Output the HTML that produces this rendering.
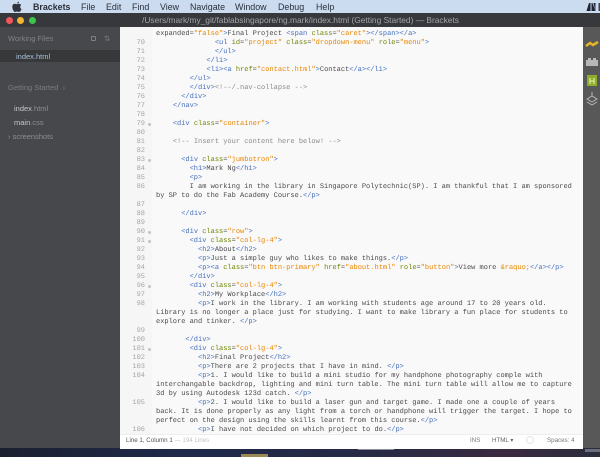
<!DOCTYPE html>
<html><head><meta charset="utf-8"><style>
html,body{margin:0;padding:0;width:600px;height:457px;overflow:hidden;background:#1c2238}
*{box-sizing:border-box}
#w{position:absolute;left:0;top:0;width:600px;height:457px;filter:blur(.3px)}
.abs{position:absolute}
.ui{font-family:"Liberation Sans",sans-serif;white-space:pre}
pre{margin:0;position:absolute;font:7px/9px "Liberation Mono",monospace;text-rendering:geometricPrecision;color:#4a4a4a}
i{font-style:normal;color:#446fbd}
b{font-weight:normal;color:#6d8600}
u{text-decoration:none;color:#e88501}
em{font-style:normal;color:#8a8a8a}
.m{position:absolute;top:1px;font:8.900px/13px "Liberation Sans",sans-serif;color:#2b2f3a;white-space:pre}
.s{position:absolute;top:435.500px;font:6.200px/10px "Liberation Sans",sans-serif;white-space:pre}
.f{position:absolute;left:148px;width:3px;height:3px;background:#c4c4c4;border-radius:50%}
.side{position:absolute;font:7.500px/10px "Liberation Sans",sans-serif;white-space:pre}
</style></head><body><div id="w">
<div class="abs" style="left:0;top:0;width:600px;height:13px;background:#ccdcf0"></div>
<svg class="abs" style="left:12px;top:1px" width="10" height="12" viewBox="0 0 10 12"><path d="M7 0.5C6 .7 5.200 1.500 5.200 2.700C6.300 2.700 7 1.700 7 .5ZM5 3.200C4 3.200 3.500 2.700 2.700 2.700C1.400 2.700.3 3.800.3 5.700C.3 8 1.800 11 3 11C3.800 11 4.200 10.500 5 10.500C5.800 10.500 6.200 11 7 11C8 11 9 9.500 9.500 8C8 7.300 7.700 5 9.200 4C8.500 3 7.500 2.700 6.900 2.700C6.200 2.700 5.600 3.200 5 3.200Z" fill="#30343d"/></svg>
<div class="m" style="left:33px;font-weight:bold">Brackets</div>
<div class="m" style="left:81px">File</div>
<div class="m" style="left:106px">Edit</div>
<div class="m" style="left:132px">Find</div>
<div class="m" style="left:160px">View</div>
<div class="m" style="left:190px">Navigate</div>
<div class="m" style="left:235px">Window</div>
<div class="m" style="left:278px">Debug</div>
<div class="m" style="left:316px">Help</div>
<svg class="abs" style="left:586px;top:3px" width="14" height="8" viewBox="0 0 14 8"><path d="M0.500 8L3 0H4.500V8ZM9.500 8L6.500 0H5.500V8ZM7.500 0H9.500V8Z" fill="#1d2230"/><path d="M12.500 0H14V8H12.500Z" fill="#39405a"/></svg>

<div class="abs" style="left:0;top:13px;width:600px;height:14px;background:#37383c"></div>
<div class="abs" style="left:6px;top:17px;width:7px;height:7px;border-radius:50%;background:#f0575c"></div>
<div class="abs" style="left:17px;top:17px;width:7px;height:7px;border-radius:50%;background:#f3b52f"></div>
<div class="abs" style="left:29px;top:17px;width:7px;height:7px;border-radius:50%;background:#3fc44a"></div>
<div class="abs ui" style="left:142px;top:14px;font-size:8.400px;line-height:13px;color:#a3a4a6">/Users/mark/my_git/fablabsingapore/ng.mark/index.html (Getting Started) — Brackets</div>

<div class="abs" style="left:0;top:27px;width:120px;height:421px;background:#47484b"></div>
<div class="abs" style="left:0;top:50px;width:120px;height:12px;background:#37383a"></div>
<div class="side" style="left:8px;top:34px;color:#828385">Working Files</div>
<div class="abs" style="left:91px;top:36px;width:5px;height:5px;border:1px solid #808183;border-radius:1px"></div>
<div class="side" style="left:104px;top:34px;color:#77787a">⇅</div>
<div class="side" style="left:16px;top:52px;color:#a8c0d8">index.html</div>
<div class="side" style="left:8px;top:83px;color:#7c7d80">Getting Started  ›</div>
<div class="side" style="left:14px;top:104px;color:#c6c7c9">index<span style="color:#8d8e90">.html</span></div>
<div class="side" style="left:14px;top:118px;color:#c6c7c9">main<span style="color:#8d8e90">.css</span></div>
<div class="side" style="left:8px;top:132px;color:#8d8e90">› screenshots</div>

<div class="abs" style="left:120px;top:27px;width:463px;height:408px;background:#f9f9f9"></div>
<div class="abs" style="left:120px;top:27px;width:32px;height:408px;background:#f6f6f6"></div>
<pre style="left:120px;top:30px;width:25px;text-align:right;color:#a6a6a6">

70
71
72
73
74
75
76
77
78
79
80
81
82
83
84
85
86

87
88
89
90
91
92
93
94
95
96
97
98


99
100
101
102
103
104


105


106</pre>
<div class="f" style="top:123px"></div>
<div class="f" style="top:159px"></div>
<div class="f" style="top:231px"></div>
<div class="f" style="top:240px"></div>
<div class="f" style="top:285px"></div>
<div class="f" style="top:348px"></div>
<pre style="left:156px;top:30px;height:404px;overflow:hidden">expanded=<u>"false"</u><i>&gt;</i>Final Project <i>&lt;span</i> <b>class</b>=<u>"caret"</u><i>&gt;&lt;/span&gt;&lt;/a&gt;</i>
              <i>&lt;ul</i> <b>id</b>=<u>"project"</u> <b>class</b>=<u>"dropdown-menu"</u> <b>role</b>=<u>"menu"</u><i>&gt;</i>
              <i>&lt;/ul&gt;</i>
            <i>&lt;/li&gt;</i>
            <i>&lt;li&gt;&lt;a</i> <b>href</b>=<u>"contact.html"</u><i>&gt;</i>Contact<i>&lt;/a&gt;&lt;/li&gt;</i>
        <i>&lt;/ul&gt;</i>
        <i>&lt;/div&gt;</i><em>&lt;!--/.nav-collapse --&gt;</em>
      <i>&lt;/div&gt;</i>
    <i>&lt;/nav&gt;</i>

    <i>&lt;div</i> <b>class</b>=<u>"container"</u><i>&gt;</i>

    <em>&lt;!-- Insert your content here below! --&gt;</em>

      <i>&lt;div</i> <b>class</b>=<u>"jumbotron"</u><i>&gt;</i>
        <i>&lt;h1&gt;</i>Mark Ng<i>&lt;/h1&gt;</i>
        <i>&lt;p&gt;</i>
        I am working in the library in Singapore Polytechnic(SP). I am thankful that I am sponsored
by SP to do the Fab Academy Course.<i>&lt;/p&gt;</i>

      <i>&lt;/div&gt;</i>

      <i>&lt;div</i> <b>class</b>=<u>"row"</u><i>&gt;</i>
        <i>&lt;div</i> <b>class</b>=<u>"col-lg-4"</u><i>&gt;</i>
          <i>&lt;h2&gt;</i>About<i>&lt;/h2&gt;</i>
          <i>&lt;p&gt;</i>Just a simple guy who likes to make things.<i>&lt;/p&gt;</i>
          <i>&lt;p&gt;&lt;a</i> <b>class</b>=<u>"btn btn-primary"</u> <b>href</b>=<u>"about.html"</u> <b>role</b>=<u>"button"</u><i>&gt;</i>View more <u>&amp;raquo;</u><i>&lt;/a&gt;&lt;/p&gt;</i>
        <i>&lt;/div&gt;</i>
        <i>&lt;div</i> <b>class</b>=<u>"col-lg-4"</u><i>&gt;</i>
          <i>&lt;h2&gt;</i>My Workplace<i>&lt;/h2&gt;</i>
          <i>&lt;p&gt;</i>I work in the library. I am working with students age around 17 to 20 years old.
Library is no longer a place just for studying. I want to make library a fun place for students to
explore and tinker. <i>&lt;/p&gt;</i>

       <i>&lt;/div&gt;</i>
        <i>&lt;div</i> <b>class</b>=<u>"col-lg-4"</u><i>&gt;</i>
          <i>&lt;h2&gt;</i>Final Project<i>&lt;/h2&gt;</i>
          <i>&lt;p&gt;</i>There are 2 projects that I have in mind. <i>&lt;/p&gt;</i>
          <i>&lt;p&gt;</i>1. I would like to build a mini studio for my handphone photography comple with
interchangable backdrop, lighting and mini turn table. The mini turn table will allow me to capture
3d by using Autodesk 123d catch. <i>&lt;/p&gt;</i>
          <i>&lt;p&gt;</i>2. I would like to build a laser gun and target game. I made one a couple of years
back. It is done properly as any light from a torch or handphone will trigger the target. I hope to
perfect on the design using the skills learnt from this course.<i>&lt;/p&gt;</i>
          <i>&lt;p&gt;</i>I have not decided on which project to do.<i>&lt;/p&gt;</i></pre>

<div class="abs" style="left:120px;top:434px;width:463px;height:15px;background:#fff;border-top:1px solid #eee"></div>
<div class="s" style="left:126px;color:#555">Line 1, Column 1 <span style="color:#c4c4c4">— 194 Lines</span></div>
<div class="s" style="left:470px;color:#777">INS</div>
<div class="s" style="left:492px;color:#666">HTML ▾</div>
<div class="abs" style="left:526px;top:436px;width:8px;height:8px;border-radius:50%;border:1px solid #e4e4e4"></div>
<div class="s" style="left:547px;color:#777">Spaces: 4</div>

<div class="abs" style="left:583px;top:27px;width:17px;height:421px;background:#585858"></div>
<svg class="abs" style="left:584px;top:36px" width="16" height="80" viewBox="0 0 16 80">
<path d="M2 10L6 7L9 9L14 6" fill="none" stroke="#e6b52a" stroke-width="2.500"/>
<path d="M2 30V24H4V22H7V24H9V22H12V24H14V30Z" fill="#b8b8b8"/>
<rect x="3" y="39" width="10" height="11" fill="#8fae2e"/>
<path d="M6 42V48M10 42V48M6 45H10" stroke="#dfe8a0" stroke-width="1.200"/>
<path d="M8 56V60M3 63L8 60L13 63L8 66ZM3 66L8 69L13 66" fill="none" stroke="#b5b5b5" stroke-width="1"/>
</svg>

<div class="abs" style="left:0;top:448px;width:600px;height:9px;background:linear-gradient(90deg,#1b2030 0,#1f2a4a 30%,#262a45 60%,#3a2a40 85%,#2a2c3c 100%)"></div>
<div class="abs" style="left:120px;top:448px;width:463px;height:1px;background:#fff"></div>
<div class="abs" style="left:241px;top:454px;width:27px;height:3px;background:#9a8a55"></div>
<div class="abs" style="left:358px;top:449px;width:36px;height:1px;background:#8e8e98"></div>
<div class="abs" style="left:585px;top:449px;width:15px;height:3px;background:#6a6f80"></div>
</div></body></html>
